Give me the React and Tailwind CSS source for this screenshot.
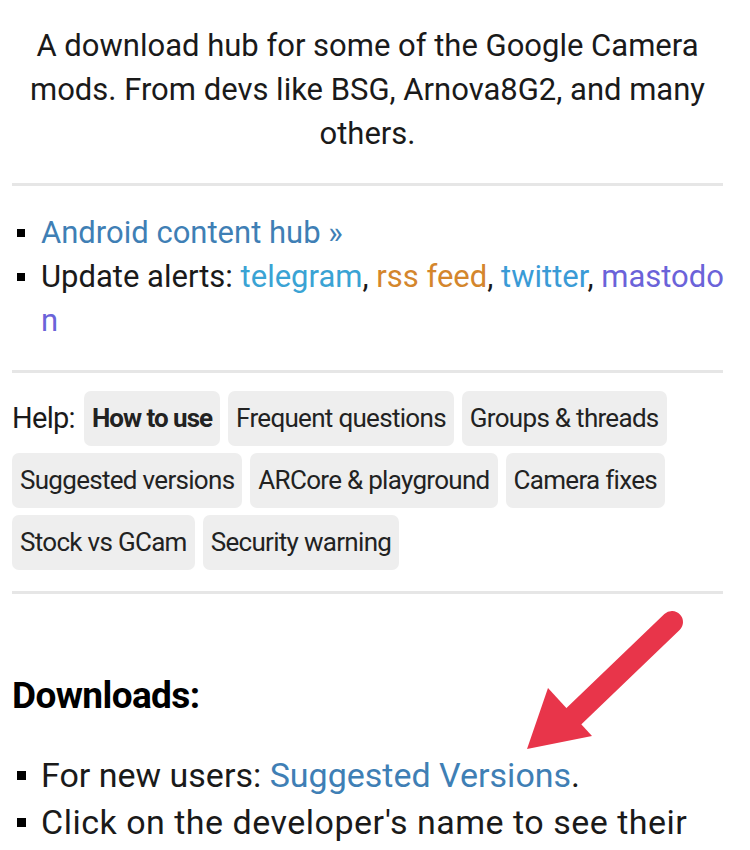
import React from 'react';

const Bullet = ({ children, lh = 'h-[44px]', sq = 'w-[8px] h-[8px]' }) => (
  <li className="flex">
    <span className={`w-[29px] shrink-0 flex items-center ${lh}`}>
      <span className={`ml-[5px] bg-black ${sq}`} />
    </span>
    <span className="min-w-0 break-all">{children}</span>
  </li>
);

const Chip = ({ children, bold }) => (
  <span
    className={`h-[55px] px-[8px] flex items-center rounded-[7px] bg-[#eeeeee] text-[26px] text-[#222] ${bold ? 'font-bold tracking-[-1px]' : 'tracking-[-0.7px]'}`}
  >
    {children}
  </span>
);

const Divider = () => <div className="h-[3px] bg-[#e6e6e6]" />;

export default function App() {
  return (
    <div className="relative w-[750px] h-[850px] overflow-hidden bg-white pl-3 pr-[27px] pt-[24px] font-['Roboto',sans-serif] text-[#1a1a1a]">
      {/* intro */}
      <p className="text-center text-[31px] leading-[44px]">
        A download hub for some of the Google Camera mods. From devs like BSG, Arnova8G2, and many others.
      </p>

      <div className="mt-[27px]">
        <Divider />
      </div>

      {/* links */}
      <ul className="mt-[25px] mr-[-5px] text-[31px] leading-[44px]">
        <Bullet>
          <span className="text-[#3f7fb5] break-normal">Android content hub »</span>
        </Bullet>
        <Bullet>
          Update alerts: <span className="text-[#3aa3d4]">telegram</span>,{' '}
          <span className="text-[#d4862c]">rss feed</span>,{' '}
          <span className="text-[#3a9bd6]">twitter</span>,{' '}
          <span className="text-[#6b63d9]">mastodon</span>
        </Bullet>
      </ul>

      <div className="mt-[27px]">
        <Divider />
      </div>

      {/* help chips */}
      <div className="mt-[18px] flex flex-wrap gap-x-[8px] gap-y-[7px]">
        <span className="h-[55px] flex items-center text-[29px] tracking-[-0.7px] pr-[1px]">Help:</span>
        <Chip bold>How to use</Chip>
        <Chip>Frequent questions</Chip>
        <Chip>Groups &amp; threads</Chip>
        <Chip>Suggested versions</Chip>
        <Chip>ARCore &amp; playground</Chip>
        <Chip>Camera fixes</Chip>
        <Chip>Stock vs GCam</Chip>
        <Chip>Security warning</Chip>
      </div>

      <div className="mt-[21px]">
        <Divider />
      </div>

      {/* downloads */}
      <h2 className="mt-[80px] text-[37px] leading-[44px] font-bold tracking-[-0.6px] text-black">Downloads:</h2>

      <ul className="mt-[34px] text-[34px] leading-[47px]">
        <Bullet lh="h-[47px]" sq="w-[9px] h-[9px]">
          For new users: <span className="text-[#3f7fb5]">Suggested Versions</span>.
        </Bullet>
        <Bullet lh="h-[47px]" sq="w-[9px] h-[9px]">
          <span className="tracking-[0.5px]">Click on the developer's name to see their</span>
        </Bullet>
      </ul>

      {/* annotation arrow */}
      <svg className="absolute left-[520px] top-[600px]" width="180" height="160" viewBox="0 0 180 160">
        <line x1="152" y1="22" x2="52" y2="118" stroke="#e8354a" strokeWidth="22" strokeLinecap="round" />
        <polygon points="7,149 28,88 72,136" fill="#e8354a" />
      </svg>
    </div>
  );
}
